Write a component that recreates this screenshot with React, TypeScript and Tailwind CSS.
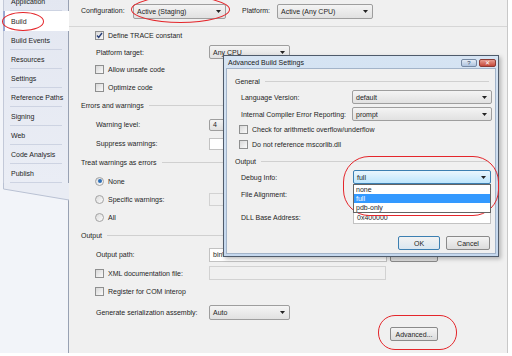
import type { ReactNode } from 'react'

const tabs = [
  'Application',
  'Build',
  'Build Events',
  'Resources',
  'Settings',
  'Reference Paths',
  'Signing',
  'Web',
  'Code Analysis',
  'Publish',
]

function Arrow() {
  return (
    <svg width="5" height="3" viewBox="0 0 5 3" className="shrink-0">
      <path d="M0 0h5L2.5 3z" fill="#222" />
    </svg>
  )
}

function Combo({ value, w, h = 14, active = false }: { value: string; w: number; h?: number; active?: boolean }) {
  return (
    <div
      style={{ width: w, height: h }}
      className={
        active
          ? 'flex items-center justify-between rounded-[2px] border border-[#3c7fb1] bg-gradient-to-b from-[#eaf6fd] to-[#bee6fd] pr-[4px] pl-[3px]'
          : 'flex items-center justify-between rounded-[2px] border border-[#9e9e9e] bg-gradient-to-b from-[#f4f4f4] to-[#e1e1e1] pr-[4px] pl-[3px]'
      }
    >
      <span>{value}</span>
      <Arrow />
    </div>
  )
}

function TextBox({ value = '', w, h = 13, disabled = false }: { value?: string; w: number; h?: number; disabled?: boolean }) {
  return (
    <div
      style={{ width: w, height: h }}
      className={
        disabled
          ? 'flex items-center border border-[#d2d2d2] bg-[#f0f0f0] pl-[3px]'
          : 'flex items-center border border-[#c2c2c2] bg-white pl-[3px]'
      }
    >
      {value}
    </div>
  )
}

function Check({ checked = false }: { checked?: boolean }) {
  return (
    <div className="flex size-[9px] shrink-0 items-center justify-center border border-[#8e8f8f] bg-gradient-to-br from-[#d8d8d8] to-[#fafafa]">
      {checked && (
        <svg width="7" height="7" viewBox="0 0 7 7">
          <path d="M1 3.6l1.7 1.8L6 1" stroke="#263e78" strokeWidth="1.4" fill="none" />
        </svg>
      )}
    </div>
  )
}

function Radio({ checked = false }: { checked?: boolean }) {
  return (
    <div className="flex size-[9px] shrink-0 items-center justify-center rounded-full border border-[#a3a3a3] bg-gradient-to-br from-[#dcdcdc] to-[#fbfbfb]">
      {checked && <div className="size-[4px] rounded-full bg-[#2e6fb7]" />}
    </div>
  )
}

function Button({ label, w, focus = false }: { label: string; w: number; focus?: boolean }) {
  return (
    <div
      style={{ width: w }}
      className={
        focus
          ? 'flex h-[14px] items-center justify-center rounded-[2px] border border-[#3c7fb1] bg-gradient-to-b from-[#f2f2f2] to-[#d9e6f0]'
          : 'flex h-[14px] items-center justify-center rounded-[2px] border border-[#8a8a8a] bg-gradient-to-b from-[#f4f4f4] to-[#dcdcdc]'
      }
    >
      {label}
    </div>
  )
}

function Group({ label, h, pl = 'pl-[12px]', pr = 'pr-[8px]' }: { label: string; h: number; pl?: string; pr?: string }) {
  return (
    <div style={{ height: h }} className={`flex items-center ${pl} ${pr}`}>
      <span>{label}</span>
      <div className="ml-[5px] h-px flex-1 bg-[#d0d0d0]" />
    </div>
  )
}

function Row({ h, children }: { h: number; children: ReactNode }) {
  return (
    <div style={{ height: h }} className="flex items-center pl-[26px]">
      {children}
    </div>
  )
}

function Label({ text }: { text: string }) {
  return <span className="w-[114px] shrink-0 pl-[1px]">{text}</span>
}

function Boxed({ text, box }: { text: string; box: ReactNode }) {
  return (
    <div className="flex w-[114px] shrink-0 items-center gap-[4px]">
      {box}
      <span>{text}</span>
    </div>
  )
}

function Sidebar() {
  return (
    <div className="flex w-[69px] shrink-0 flex-col border-r border-[#98a1b3] bg-[#f2f4f9] pl-[3px]">
      <div className="-mt-[7px] flex flex-col border-l border-[#c3c9d8] bg-gradient-to-b from-[#e3e7f1] to-[#eaedf5]">
        {tabs.map((t) =>
          t === 'Build' ? (
            <div key={t} className="-mr-[2px] -ml-px flex h-[20px] items-center border-l-2 border-[#9aa8d2] bg-white pl-[6px]">
              {t}
            </div>
          ) : (
            <div key={t} className={t === 'Application' ? 'h-[18px] px-[6px]' : 'h-[19px] px-[6px]'}>
              <div className="flex h-full items-center border-b border-[#cdd3e2] pl-px whitespace-nowrap">{t}</div>
            </div>
          ),
        )}
      </div>
      <svg width="66" height="18" viewBox="0 0 66 18" className="block">
        <polygon points="0,0 66,0 66,17 0,6" fill="#e9ecf4" />
        <path d="M0.5 0V6L66 17" stroke="#b9c1d3" fill="none" />
      </svg>
    </div>
  )
}

function Main() {
  return (
    <div className="mr-[4px] flex flex-1 flex-col border-r border-[#c8c8c8] bg-[#f0f0f0]">
      <div className="flex h-[27px] shrink-0 items-start border-b border-[#d6d6d6] pt-[4px] pl-[12px]">
        <span className="mt-[3px] w-[52px]">Configuration:</span>
        <Combo value="Active (Staging)" w={93} h={15} />
        <span className="mt-[3px] ml-[16px] w-[35px]">Platform:</span>
        <Combo value="Active (Any CPU)" w={96} h={15} />
      </div>
      <Row h={16}>
        <Boxed text="Define TRACE constant" box={<Check checked />} />
      </Row>
      <Row h={18}>
        <Label text="Platform target:" />
        <Combo value="Any CPU" w={81} />
      </Row>
      <Row h={17}>
        <Boxed text="Allow unsafe code" box={<Check />} />
      </Row>
      <Row h={18}>
        <Boxed text="Optimize code" box={<Check />} />
      </Row>
      <Group label="Errors and warnings" h={19} />
      <Row h={19}>
        <Label text="Warning level:" />
        <Combo value="4" w={82} h={12} />
      </Row>
      <Row h={19}>
        <Label text="Suppress warnings:" />
        <TextBox w={178} h={12} />
      </Row>
      <Group label="Treat warnings as errors" h={19} />
      <Row h={18}>
        <Boxed text="None" box={<Radio checked />} />
      </Row>
      <Row h={18}>
        <Boxed text="Specific warnings:" box={<Radio />} />
        <TextBox w={178} h={13} disabled />
      </Row>
      <Row h={18}>
        <Boxed text="All" box={<Radio />} />
      </Row>
      <Group label="Output" h={19} />
      <Row h={19}>
        <Label text="Output path:" />
        <TextBox value="bin\" w={178} h={14} />
        <div className="ml-[3px]">
          <Button label="Browse..." w={48} />
        </div>
      </Row>
      <Row h={18}>
        <Boxed text="XML documentation file:" box={<Check />} />
        <TextBox w={177} h={14} disabled />
      </Row>
      <Row h={19}>
        <Boxed text="Register for COM interop" box={<Check />} />
      </Row>
      <Row h={22}>
        <Label text="Generate serialization assembly:" />
        <Combo value="Auto" w={81} h={15} />
      </Row>
      <div className="flex h-[22px] items-center pl-[321px]">
        <Button label="Advanced..." w={48} />
      </div>
    </div>
  )
}

function DRow({ h, children }: { h: number; children: ReactNode }) {
  return (
    <div style={{ height: h }} className="flex items-center pl-[14px]">
      {children}
    </div>
  )
}

function DLabel({ text }: { text: string }) {
  return <span className="w-[111px] shrink-0">{text}</span>
}

function Dialog() {
  return (
    <div className="absolute top-[55px] left-[223px] flex h-[202px] w-[276px] flex-col border border-[#4f5b6b] bg-gradient-to-b from-[#d6e4f3] to-[#c5d8ee] px-[2px] pb-[2px] shadow-[2px_2px_4px_rgba(0,0,0,0.25)]">
      <div className="flex h-[12px] shrink-0 items-center justify-between pl-[2px]">
        <span className="text-[#1a1a1a]">Advanced Build Settings</span>
        <div className="flex gap-[2px] pt-[2px]">
          <div className="flex h-[8px] w-[16px] items-center justify-center rounded-[2px] border border-[#7689a3] bg-gradient-to-b from-[#e3ebf5] to-[#aec3de] text-[6px] leading-none text-[#33475f]">
            ?
          </div>
          <div className="flex h-[8px] w-[17px] items-center justify-center rounded-[2px] border border-[#8a3a33] bg-gradient-to-b from-[#e79d92] to-[#c4473a] text-[6px] leading-none text-white">
            ✕
          </div>
        </div>
      </div>
      <div className="flex flex-1 flex-col border border-[#a3b4c9] bg-[#f0f0f0] pt-[4px]">
        <Group label="General" h={16} pl="pl-[8px]" pr="pr-[6px]" />
        <DRow h={16}>
          <DLabel text="Language Version:" />
          <Combo value="default" w={140} />
        </DRow>
        <DRow h={18}>
          <DLabel text="Internal Compiler Error Reporting:" />
          <Combo value="prompt" w={140} />
        </DRow>
        <DRow h={13}>
          <div className="-ml-[2px] flex items-center gap-[4px]">
            <Check />
            <span>Check for arithmetic overflow/underflow</span>
          </div>
        </DRow>
        <DRow h={17}>
          <div className="-ml-[2px] flex items-center gap-[4px]">
            <Check />
            <span>Do not reference mscorlib.dll</span>
          </div>
        </DRow>
        <Group label="Output" h={16} pl="pl-[8px]" pr="pr-[6px]" />
        <DRow h={16}>
          <DLabel text="Debug Info:" />
          <div className="relative ml-px">
            <Combo value="full" w={138} active />
            <div className="absolute top-[14px] left-0 z-10 flex w-[138px] flex-col border border-[#646464] bg-white leading-none">
              <div className="flex h-[9px] items-center pl-[2px]">none</div>
              <div className="flex h-[9px] items-center bg-[#3399ff] pl-[2px] text-white">full</div>
              <div className="flex h-[9px] items-center pl-[2px]">pdb-only</div>
            </div>
          </div>
        </DRow>
        <DRow h={19}>
          <DLabel text="File Alignment:" />
        </DRow>
        <DRow h={26}>
          <DLabel text="DLL Base Address:" />
          <div className="ml-px">
            <TextBox value="0x400000" w={138} h={13} />
          </div>
        </DRow>
        <div className="flex flex-1 items-start justify-end gap-[6px] pt-[6px] pr-[5px]">
          <Button label="OK" w={42} focus />
          <Button label="Cancel" w={44} />
        </div>
      </div>
    </div>
  )
}

export default function App() {
  return (
    <div className="relative h-[356px] w-[512px] overflow-hidden bg-white font-['Liberation_Sans',Arial,sans-serif] text-[7px] leading-none text-[#1e1e1e]">
      <div className="flex h-[353px]">
        <Sidebar />
        <Main />
      </div>
      <Dialog />
      {/* red annotation marks */}
      <div className="pointer-events-none absolute top-[12px] left-[2px] h-[19px] w-[42px] rounded-[50%] border-[1.5px] border-[#e4262b]" />
      <div className="pointer-events-none absolute -top-[4px] left-[131px] h-[27px] w-[99px] rounded-[50%] border-[1.5px] border-[#e4262b]" />
      <div className="pointer-events-none absolute top-[156px] left-[343px] h-[60px] w-[156px] rounded-[26px] border-[1.5px] border-[#e4262b]" />
      <div className="pointer-events-none absolute top-[315px] left-[378px] h-[35px] w-[79px] rounded-[17px] border-[1.5px] border-[#e4262b]" />
    </div>
  )
}
